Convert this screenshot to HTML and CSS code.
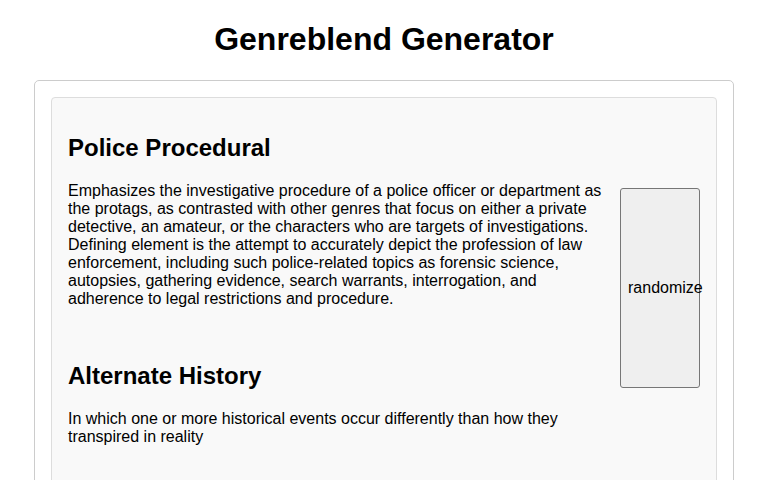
FILE: index.html
```html
<!DOCTYPE html>
<html lang="en">
<head>
    <meta charset="UTF-8">
    <meta name="viewport" content="width=device-width, initial-scale=1.0">
    <title>Genreblend Generator</title>
    <link rel="stylesheet" href="styles.css">
</head>
<body>
    <h1>Genreblend Generator</h1>

    <div class="container">
        <div class="blend">
            <div class="genres">
                <div class="genre">
                    <h2>Police Procedural</h2>
                    <p>Emphasizes the investigative procedure of a police officer or department as the protags, as contrasted with other genres that focus on either a private detective, an amateur, or the characters who are targets of investigations. Defining element is the attempt to accurately depict the profession of law enforcement, including such police-related topics as forensic science, autopsies, gathering evidence, search warrants, interrogation, and adherence to legal restrictions and procedure.</p>
                </div>
                <div class="genre">
                    <h2>Alternate History</h2>
                    <p>In which one or more historical events occur differently than how they transpired in reality</p>
                </div>
            </div>
            <button type="button" class="randomize">randomize</button>
        </div>
    </div>
</body>
</html>
```

FILE: styles.css
```css
body {
    margin: 0;
    padding: 0 8px;
    font-family: "Liberation Sans", Arial, sans-serif;
    color: #000;
    background-color: #fff;
}

h1 {
    text-align: center;
    font-size: 32px;
}

h2 {
    font-size: 24px;
}

.container {
    max-width: 700px;
    margin: 0 auto;
    padding: 16px;
    border: 1px solid #ccc;
    border-radius: 5px;
    box-sizing: border-box;
}

.blend {
    display: flex;
    gap: 16px;
    padding: 16px;
    background: #f9f9f9;
    border: 1px solid #ddd;
    border-radius: 4px;
}

.genres {
    flex: 1;
}

.genre {
    padding-bottom: 18px;
}

.genre p {
    font-size: 16px;
}

.randomize {
    flex-shrink: 0;
    align-self: flex-start;
    width: 80px;
    height: 200px;
    margin-top: 74px;
    font-family: "Liberation Sans", Arial, sans-serif;
    font-size: 16px;
    color: #000;
    background: #efefef;
    border: 1px solid #767676;
    border-radius: 3px;
    padding: 1px 6px 1px 7px;
    white-space: nowrap;
    text-align: left;
    cursor: pointer;
}
```
